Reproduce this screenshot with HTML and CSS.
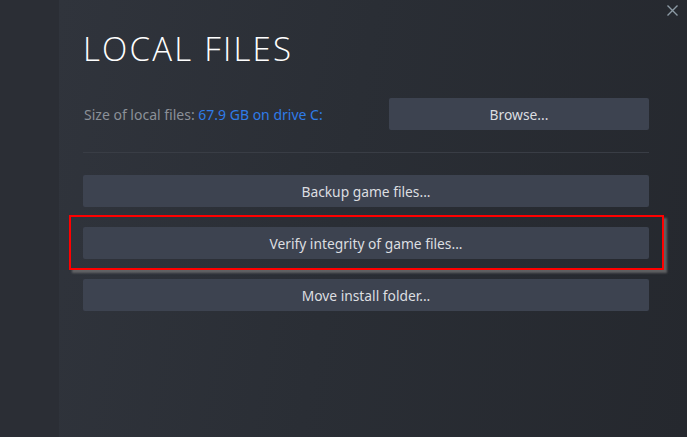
FILE: index.html
```html
<!DOCTYPE html>
<html>
<head>
<meta charset="utf-8">
<link rel="stylesheet" href="styles.css">
</head>
<body>
<div class="window">
  <div class="sidebar"></div>
  <div class="panel">
    <div class="close">
      <svg width="11" height="11" viewBox="0 0 11 11"><path d="M0.5 0.5L10.5 10.5M10.5 0.5L0.5 10.5" stroke="#8c9aa4" stroke-width="1.4" fill="none"/></svg>
    </div>
    <h1 class="title">LOCAL FILES</h1>
    <div class="size-row">
      <div class="size-label">Size of local files: <span class="size-link">67.9 GB on drive C:</span></div>
      <button class="btn btn-browse">Browse...</button>
    </div>
    <div class="separator"></div>
    <div class="actions">
      <button class="btn">Backup game files...</button>
      <div class="highlight-wrap">
        <div class="highlight"></div>
        <button class="btn">Verify integrity of game files...</button>
      </div>
      <button class="btn">Move install folder...</button>
    </div>
  </div>
</div>
</body>
</html>
```

FILE: styles.css
```css
html, body {
  margin: 0;
  padding: 0;
  width: 687px;
  height: 437px;
  overflow: hidden;
  background: #2a2d34;
  font-family: "Noto Sans", "Open Sans", Arial, sans-serif;
}

.window {
  display: flex;
  width: 687px;
  height: 437px;
}

.sidebar {
  width: 59px;
  flex: none;
  background: #2b2e35;
}

.panel {
  flex: 1;
  position: relative;
  padding: 29px 38px 0 24px;
  background: linear-gradient(100deg, #30343c 0%, #2a2e35 45%, #25282e 100%);
}

.close {
  position: absolute;
  top: 5px;
  right: 9px;
  width: 11px;
  height: 11px;
  display: flex;
}

.title {
  margin: 0;
  font-family: "Open Sans", "Noto Sans", sans-serif;
  font-weight: 300;
  font-size: 33px;
  line-height: 40px;
  letter-spacing: 2.2px;
  color: #ffffff;
  padding-left: 0;
}

.size-row {
  display: flex;
  align-items: center;
  margin-top: 29px;
}

.size-label {
  flex: 1;
  font-size: 14px;
  color: #8b9098;
  padding-left: 1px;
}

.size-link {
  color: #2f7ce8;
}

.btn {
  display: block;
  border: none;
  border-radius: 2px;
  height: 32px;
  width: 100%;
  padding: 0;
  background: #3d4350;
  color: #dcdee0;
  font-family: "Noto Sans", "Open Sans", Arial, sans-serif;
  font-size: 13.8px;
}

.btn-browse {
  width: 260px;
  flex: none;
}

.separator {
  height: 1px;
  background: #393d45;
  margin-top: 22px;
}

.actions {
  display: flex;
  flex-direction: column;
  gap: 20px;
  margin-top: 22px;
}

.highlight-wrap {
  position: relative;
}

.highlight {
  position: absolute;
  left: -14px;
  right: -15px;
  top: -12px;
  bottom: -11px;
  border: 2px solid #ff0000;
  box-shadow: 3px 3px 2px rgba(120, 120, 120, 0.7);
}
```
